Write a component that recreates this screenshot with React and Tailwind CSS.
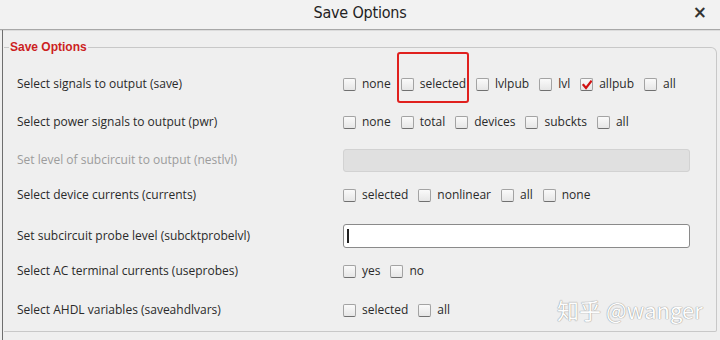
import React from "react";

function Box({ checked }) {
  return (
    <span className="relative inline-block w-[13px] h-[13px] shrink-0 rounded-[2px] border border-[#a3a3a3] border-b-[#707070] bg-gradient-to-b from-[#fafafa] to-[#e6e6e6]">
      {checked && (
        <svg className="absolute left-[1px] top-[1px]" width="10" height="10" viewBox="0 0 10 10">
          <path d="M1.5 5 L4 8 L9 1.5" fill="none" stroke="#d01010" strokeWidth="2.2" strokeLinecap="square" />
        </svg>
      )}
    </span>
  );
}

function Opt({ label, checked }) {
  return (
    <div className="flex items-center gap-[6px]">
      <Box checked={checked} />
      <span className="text-[#2a2a2a]">{label}</span>
    </div>
  );
}

function Row({ h, label, disabled, children }) {
  return (
    <div className={`flex items-center ${h}`}>
      <div className={`w-[339px] pl-[13px] ${disabled ? "text-[#9c9c9c]" : "text-[#2a2a2a]"}`}>{label}</div>
      <div className="flex-1 flex items-center">{children}</div>
    </div>
  );
}

export default function App() {
  return (
    <div className="relative w-[720px] h-[340px] bg-[#efefef] overflow-hidden text-[12px] font-['Open_Sans','Liberation_Sans',sans-serif]">
      <div className="absolute left-[2px] top-0 bottom-0 w-[1px] bg-[#6e6e6e]" />
      {/* title bar */}
      <div className="h-[30px] flex items-start justify-center pt-[1px] relative bg-[#f2f2f2] border-b border-[#a8a8a8]">
        <span className="text-[16px] text-[#222] font-['DejaVu_Sans_Condensed','DejaVu_Sans',sans-serif] tracking-[-0.2px]">Save Options</span>
        <span className="absolute right-[13px] top-[0px] text-[17px] font-bold text-[#333] font-['DejaVu_Sans',sans-serif]">×</span>
      </div>
      <div className="h-[1px] bg-[#dcdcdc]" />
      {/* fieldset */}
      <div className="pl-[4px] pr-[3px] pt-[16px]">
        <div className="relative h-[285px] border border-[#c8c8c8] border-l-0 rounded-tr-[6px] rounded-br-[2px]">
          <div className="absolute left-[5px] top-[-9px] px-[1px] bg-[#efefef] text-[12px] font-bold text-[#cc1f1f] font-['Liberation_Sans',sans-serif] leading-[16px]">
            Save Options
          </div>
          <div className="pt-[17px] pr-[26px]">
            <Row h="h-[38px]" label="Select signals to output (save)">
              <div className="flex items-center gap-[10px]">
                <Opt label="none" />
                <Opt label="selected" />
                <Opt label="lvlpub" />
                <Opt label="lvl" />
                <Opt label="allpub" checked />
                <Opt label="all" />
              </div>
            </Row>
            <Row h="h-[38px]" label="Select power signals to output (pwr)">
              <div className="flex items-center gap-[10px]">
                <Opt label="none" />
                <Opt label="total" />
                <Opt label="devices" />
                <Opt label="subckts" />
                <Opt label="all" />
              </div>
            </Row>
            <Row h="h-[38px]" label="Set level of subcircuit to output (nestlvl)" disabled>
              <div className="w-full h-[23px] rounded-[3px] bg-[#e0e0e0] border border-[#d2d2d2]" />
            </Row>
            <Row h="h-[32px]" label="Select device currents (currents)">
              <div className="flex items-center gap-[10px]">
                <Opt label="selected" />
                <Opt label="nonlinear" />
                <Opt label="all" />
                <Opt label="none" />
              </div>
            </Row>
            <Row h="h-[50px]" label="Set subcircuit probe level (subcktprobelvl)">
              <div className="w-full h-[24px] rounded-[3px] bg-white border border-[#8a8a8a] flex items-center pl-[3px]">
                <div className="w-[1.5px] h-[14px] bg-[#222]" />
              </div>
            </Row>
            <Row h="h-[20px]" label="Select AC terminal currents (useprobes)">
              <div className="flex items-center gap-[10px]">
                <Opt label="yes" />
                <Opt label="no" />
              </div>
            </Row>
            <Row h="h-[50px] pt-[8px]" label="Select AHDL variables (saveahdlvars)">
              <div className="flex items-center gap-[10px]">
                <Opt label="selected" />
                <Opt label="all" />
              </div>
            </Row>
          </div>
        </div>
      </div>
      {/* highlight */}
      <div className="absolute left-[397px] top-[52px] w-[72px] h-[51px] border-2 border-[#e0201e] rounded-[3px]" />
      {/* watermark */}
      <div className="absolute left-[557px] top-[293px] text-[22px] text-white font-['Noto_Sans_CJK_SC','Noto_Sans',sans-serif] [text-shadow:0_0_1px_#8a8a8a,0_0_1px_#8a8a8a] opacity-90">
        知乎 @wanger
      </div>
    </div>
  );
}
